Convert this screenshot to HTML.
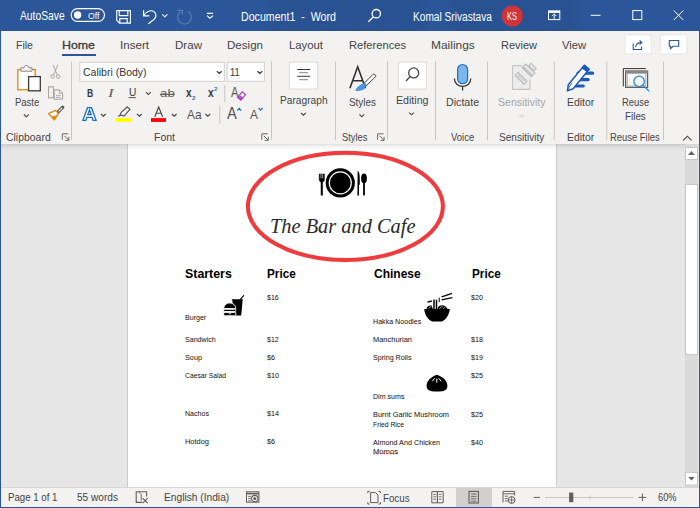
<!DOCTYPE html>
<html><head><meta charset="utf-8"><title>Document1 - Word</title>
<style>
html,body{margin:0;padding:0;}
body{width:700px;height:508px;overflow:hidden;position:relative;background:#f3f2f1;font-family:"Liberation Sans",sans-serif;}
.t{position:absolute;white-space:nowrap;transform-origin:0 0;}
.a{position:absolute;}
svg.ov{position:absolute;left:0;top:0;}
</style></head><body>

<div class="a" style="left:0;top:0;width:700px;height:31px;background:#2b579a"></div>
<div class="a" style="left:260px;top:0;width:330px;height:31px;background:linear-gradient(90deg,rgba(10,20,50,0) 0px,rgba(10,20,50,0.07) 14px,rgba(10,20,50,0.07) 160px,rgba(10,20,50,0) 172px,rgba(10,20,50,0) 182px,rgba(10,20,50,0.07) 192px,rgba(10,20,50,0.07) 312px,rgba(10,20,50,0) 326px)"></div>
<div class="a" style="left:0;top:144px;width:700px;height:343px;background:#e6e6e6"></div>
<div class="a" style="left:127px;top:144px;width:428px;height:343px;background:#fff;border-left:1px solid #cbcbcb;border-right:1px solid #cbcbcb"></div>
<div class="a" style="left:0;top:144px;width:700px;height:6px;background:linear-gradient(rgba(0,0,0,0.12),rgba(0,0,0,0.05) 40%,rgba(0,0,0,0))"></div>
<div class="a" style="left:685px;top:144px;width:13px;height:343px;background:#dadada"></div>
<div class="a" style="left:0;top:487px;width:700px;height:1px;background:#d6d6d6"></div>
<div class="a" style="left:456px;top:488px;width:36px;height:19px;background:#d2d0ce"></div>
<div class="a" style="left:0;top:31px;width:1px;height:477px;background:#2b579a"></div>
<div class="a" style="left:699px;top:31px;width:1px;height:477px;background:#2b579a"></div>
<div class="a" style="left:0;top:507px;width:700px;height:1px;background:#2b579a"></div>
<svg class="ov" width="700" height="508" viewBox="0 0 700 508"><rect x="71.2" y="8.6" width="33.3" height="12.8" rx="6.4" fill="none" stroke="#fff" stroke-width="1.1"/><circle cx="77.6" cy="15" r="3.7" fill="#fff"/><path d="M116.7 10.6H130.4V23.1H119.5L116.7 20.3Z" fill="none" stroke="#fff" stroke-width="1.1"/><path d="M119.2 10.6V15.6H127.8V10.6M119.8 23.1V18.6H127.2V23.1" fill="none" stroke="#fff" stroke-width="1.1"/><path d="M143.9 15.5C146.2 11.4 150.6 9.6 153.8 11.6C156.6 13.4 156.4 17 154.2 19.2L148.4 23.8" fill="none" stroke="#fff" stroke-width="1.2"/><path d="M143.6 10V15.8H149.4" fill="none" stroke="#fff" stroke-width="1.2"/><path d="M162.2 14.4l2.6 2.4 2.6-2.4" fill="none" stroke="#fff" stroke-width="1.1"/><path d="M180.4 11.8A6.8 6.8 0 1 0 188.2 11.5" fill="none" stroke="#5b7db3" stroke-width="1.2"/><path d="M177.2 10.4h5.2v4.4" fill="none" stroke="#5b7db3" stroke-width="1.2"/><path d="M206.8 13.4h6.3M207 15.6l3 2.6 3-2.6" fill="none" stroke="#fff" stroke-width="1.1"/><circle cx="376.3" cy="13.7" r="4.2" fill="none" stroke="#fff" stroke-width="1.3"/><path d="M373.2 16.9L368.4 21.8" stroke="#fff" stroke-width="1.4"/><circle cx="512.4" cy="16" r="10.6" fill="#d13438"/><rect x="548.5" y="10.9" width="11.3" height="8.7" fill="none" stroke="#fff" stroke-width="1"/><rect x="548.5" y="10.9" width="11.3" height="2" fill="#fff"/><path d="M554.2 18.8v-4.8M552.2 15.8l2-2 2 2" fill="none" stroke="#fff" stroke-width="1"/><path d="M590.8 15.3h9.8" stroke="#fff" stroke-width="1"/><rect x="632.8" y="10.6" width="9" height="9" fill="none" stroke="#fff" stroke-width="1"/><path d="M673.8 10.5l9.5 9.5M683.3 10.5l-9.5 9.5" stroke="#fff" stroke-width="1"/><rect x="62" y="54" width="34" height="2" fill="#2b579a"/><rect x="624.9" y="34.9" width="26.4" height="19" rx="1.2" fill="#fff" stroke="#e3e1df" stroke-width="0.8"/><rect x="660.3" y="34.9" width="26.6" height="19" rx="1.2" fill="#fff" stroke="#e3e1df" stroke-width="0.8"/><path d="M633.2 43.4V49.5H641.6V46.4" fill="none" stroke="#2b579a" stroke-width="1.1"/><path d="M635.6 47.2C635.8 44.2 637.8 42.6 641.2 42.6M639.6 40.5L641.9 42.6L639.6 44.7" fill="none" stroke="#2b579a" stroke-width="1.1"/><path d="M669.3 40.5H678.7V46.3H673.2L670.6 48.6V46.3H669.3Z" fill="none" stroke="#2b579a" stroke-width="1.1"/><rect x="71.0" y="61.5" width="1" height="78.5" fill="#c8c6c4"/><rect x="271.0" y="61.5" width="1" height="78.5" fill="#c8c6c4"/><rect x="335.0" y="61.5" width="1" height="78.5" fill="#c8c6c4"/><rect x="387.0" y="61.5" width="1" height="78.5" fill="#c8c6c4"/><rect x="435.0" y="61.5" width="1" height="78.5" fill="#c8c6c4"/><rect x="487.0" y="61.5" width="1" height="78.5" fill="#c8c6c4"/><rect x="553.8" y="61.5" width="1" height="78.5" fill="#c8c6c4"/><rect x="606.3" y="61.5" width="1" height="78.5" fill="#c8c6c4"/><rect x="663.0" y="61.5" width="1" height="78.5" fill="#c8c6c4"/><rect x="224.3" y="85" width="1" height="17" fill="#c8c6c4"/><rect x="219.3" y="105.5" width="1" height="18.5" fill="#c8c6c4"/><path d="M62.3 139.8v-6h6" fill="none" stroke="#605e5c" stroke-width="0.9"/><path d="M64.3 135.8l4.3 4.3M68.8 136.8v3.6h-3.6" fill="none" stroke="#605e5c" stroke-width="0.9"/><path d="M261.8 139.8v-6h6" fill="none" stroke="#605e5c" stroke-width="0.9"/><path d="M263.8 135.8l4.3 4.3M268.3 136.8v3.6h-3.6" fill="none" stroke="#605e5c" stroke-width="0.9"/><path d="M377.6 139.8v-6h6" fill="none" stroke="#605e5c" stroke-width="0.9"/><path d="M379.6 135.8l4.3 4.3M384.1 136.8v3.6h-3.6" fill="none" stroke="#605e5c" stroke-width="0.9"/><rect x="17.8" y="69.6" width="17.4" height="20.2" fill="#fff" stroke="#e8820c" stroke-width="1.3"/><path d="M20.8 71.2v-3.4h3.2c0.3-1.6 1.2-2.4 2.4-2.4s2.1 0.8 2.4 2.4h3.2v3.4z" fill="#f3f2f1" stroke="#8a8886" stroke-width="1"/><rect x="28.6" y="76.6" width="11.7" height="14.2" fill="#fff" stroke="#3b3a39" stroke-width="1.3"/><path d="M23.9 114.5l2.4 2.3 2.4-2.3" fill="none" stroke="#4a4948" stroke-width="1.15"/><circle cx="52.6" cy="76.4" r="1.8" fill="none" stroke="#a19f9d" stroke-width="0.9"/><circle cx="58.2" cy="76.4" r="1.8" fill="none" stroke="#a19f9d" stroke-width="0.9"/><path d="M53.6 74.9L57.8 64.8M57.2 74.9L53 64.8" stroke="#a19f9d" stroke-width="0.9"/><rect x="48.6" y="86.8" width="4.8" height="11" fill="#f3f2f1" stroke="#a19f9d" stroke-width="1"/><path d="M54.2 89.8h5.2l3.2 3.2v6.2h-8.4z" fill="#f3f2f1" stroke="#a19f9d" stroke-width="1"/><path d="M59.2 89.8v3.4h3.4" fill="none" stroke="#a19f9d" stroke-width="0.8"/><path d="M56 95.6h4.6M56 97.4h4.6" stroke="#a19f9d" stroke-width="0.8"/><path d="M62.6 107.4L57.6 112.4" stroke="#5a5958" stroke-width="3.4" stroke-linecap="round"/><path d="M62.2 107.8L58.6 111.4" stroke="#f3f2f1" stroke-width="1.2"/><path d="M48.6 113.6L55.4 110.4L58.4 113.4L54.4 120z" fill="#fff" stroke="#e8820c" stroke-width="1.3" stroke-linejoin="round"/><path d="M51.8 116.6L57.4 115L54.4 120z" fill="#e8820c"/><rect x="79.9" y="62.3" width="144.4" height="19" fill="#fff" stroke="#d2d0ce" stroke-width="1"/><rect x="227.2" y="62.3" width="37.2" height="19" fill="#fff" stroke="#d2d0ce" stroke-width="1"/><path d="M216.9 71.2l2.4 2.3 2.4-2.3M257.4 71.2l2.4 2.3 2.4-2.3" fill="none" stroke="#3b3a39" stroke-width="1.2"/><path d="M146 92.2l2.4 2.2 2.4-2.2" fill="none" stroke="#4a4948" stroke-width="1.15"/><path d="M101 114l2.4 2.2 2.4-2.2" fill="none" stroke="#4a4948" stroke-width="1.15"/><path d="M137 114l2.4 2.2 2.4-2.2" fill="none" stroke="#4a4948" stroke-width="1.15"/><path d="M171.8 114l2.4 2.2 2.4-2.2" fill="none" stroke="#4a4948" stroke-width="1.15"/><path d="M205.4 114l2.4 2.2 2.4-2.2" fill="none" stroke="#4a4948" stroke-width="1.15"/><rect x="128.6" y="97.1" width="7.3" height="1" fill="#605e5c"/><rect x="159.9" y="93.8" width="14.8" height="1" fill="#444"/><rect x="116" y="118.1" width="15" height="3.8" fill="#ffff00"/><path d="M120.2 115.2l0.8-2.6 6.4-5.8 2.6 2.6-5.8 6.4z" fill="none" stroke="#555" stroke-width="1.2" stroke-linejoin="round"/><path d="M118.2 116.6l2-1.4" stroke="#555" stroke-width="1.2"/><rect x="151" y="118.1" width="15" height="3.8" fill="#ff0000"/><path d="M154.8 116.8l3.9-9.8 3.9 9.8M156.2 113.2h5" fill="none" stroke="#444" stroke-width="1.1"/><path d="M82.9 120.3L87.5 107.7H91.5L96.1 120.3H93.1L92.1 117.3H86.9L85.9 120.3ZM87.8 114.7H91.2L89.5 109.9Z" fill="#fff" fill-rule="evenodd" stroke="#1a6ec7" stroke-width="1.3" stroke-linejoin="miter"/><path d="M237.6 97.4l4.6-5.6 3.3 2.8-4.6 5.6z" fill="#fff" stroke="#b146c2" stroke-width="1.3"/><path d="M238 97.8l2.2-2.6 3.2 2.7-2 2.4z" fill="#b146c2"/><path d="M237.2 110.6l2-2.2 2 2.2M258.6 108l2 2.2 2-2.2" fill="none" stroke="#1a6ec7" stroke-width="1.2"/><rect x="289.3" y="62.2" width="28.4" height="26.8" fill="#fff" stroke="#dcdad8" stroke-width="1"/><path d="M297.2 69.5h12.9M297.2 76.3h12.9" stroke="#3b3a39" stroke-width="1"/><path d="M299.2 72.7h8.8M299.2 79.7h8.8" stroke="#8a8886" stroke-width="1"/><path d="M301 113l2.4 2.2 2.4-2.2M359.4 114.4l2.4 2.2 2.4-2.2M409.2 112.6l2.4 2.2 2.4-2.2" fill="none" stroke="#4a4948" stroke-width="1.15"/><path d="M519.2 115l2.4 2.2 2.4-2.2" fill="none" stroke="#c8c6c4" stroke-width="1"/><path d="M349.9 88.2L357.7 66.8L365.5 88.2M352.5 80.8h10.4" fill="none" stroke="#323130" stroke-width="1.6"/><g transform="translate(364.2 85.6) rotate(-45)"><rect x="0" y="-1.7" width="15.4" height="3.4" rx="1.2" fill="#fff" stroke="#3b3a39" stroke-width="0.9"/></g><path d="M355.8 90.4C357.6 86.6 361.6 83.6 365.8 83.8C367 86.6 364.4 91 355.8 90.4z" fill="#4a98e4" stroke="#1a6ec7" stroke-width="0.6"/><rect x="398.3" y="62.2" width="28" height="26.8" fill="#fff" stroke="#dcdad8" stroke-width="1"/><circle cx="413.7" cy="72.9" r="5" fill="none" stroke="#444" stroke-width="1.3"/><path d="M410 76.6L406 81" stroke="#444" stroke-width="1.4"/><rect x="457.6" y="64.5" width="10" height="19.2" rx="5" fill="#7cb7ea" stroke="#1e6fc4" stroke-width="1.2"/><path d="M454.4 78.6c0 4.6 3.6 7.8 8.2 7.8s8.2-3.2 8.2-7.8" fill="none" stroke="#3b3a39" stroke-width="1.3"/><path d="M462.6 86.4v4.2" stroke="#3b3a39" stroke-width="1.3"/><rect x="512.6" y="65.6" width="17.4" height="23.8" fill="#ececec"/><path d="M522 65.6H512.6V89.4H530V79.6" fill="none" stroke="#c4c4c4" stroke-width="1.1"/><g transform="translate(521.1 78.3) rotate(45)"><rect x="-6.2" y="-2.1" width="12.4" height="4.2" fill="#ececec" stroke="#b8b8b8" stroke-width="1.1"/><rect x="-4" y="-0.7" width="8" height="1.4" fill="none" stroke="#b8b8b8" stroke-width="0.8"/></g><g transform="translate(528.5 70.4) rotate(45)"><rect x="-6.4" y="-2.6" width="12.8" height="5.2" fill="#e6e6e6" stroke="#b8b8b8" stroke-width="1.1"/><rect x="-6.4" y="0.4" width="12.8" height="1.6" fill="#c0c0c0"/></g><g transform="translate(532.6 66.9) rotate(45)"><rect x="-3.6" y="-1.5" width="7.2" height="3" fill="#f0f0f0" stroke="#b8b8b8" stroke-width="1.1"/></g><path d="M578 73.2h14.6M573.6 79.6h14.6M569.4 86h13.8" stroke="#185abd" stroke-width="3.2" stroke-linecap="round"/><g transform="translate(567.4 90.8) rotate(-50.6)"><path d="M0 0L5.2 -3.1H30.4V3.1H5.2z" fill="#fff" stroke="#185abd" stroke-width="1.5" stroke-linejoin="round"/><rect x="26.6" y="-3.3" width="4.6" height="6.6" fill="#185abd"/><path d="M2 -0.6L9 -1.6" stroke="#185abd" stroke-width="0.8"/></g><path d="M623.3 86.4V68.6h22.6" fill="none" stroke="#323130" stroke-width="1"/><rect x="625.6" y="71.0" width="22" height="16.4" fill="#f3f2f1" stroke="#605e5c" stroke-width="1.2"/><rect x="625.6" y="71.0" width="22" height="2.2" fill="#8a8886"/><rect x="627.2" y="73.4" width="18.6" height="12.6" fill="#f7f7f7" stroke="#a19f9d" stroke-width="0.8"/><circle cx="639.1" cy="81.4" r="5.2" fill="#f7f9fb" stroke="#2b8ad8" stroke-width="1.3"/><path d="M642.8 85.1l6.4 6.2" stroke="#2b8ad8" stroke-width="1.3"/><path d="M683.2 140.4l4.2-4.2 4.2 4.2" fill="none" stroke="#444" stroke-width="1.1"/><rect x="685.5" y="147.5" width="12" height="12" fill="#fff" stroke="#c6c6c6" stroke-width="1"/><path d="M688 154.9h6.8l-3.4-3.8z" fill="#606060"/><rect x="685.5" y="184.5" width="12" height="170" fill="#fff" stroke="#c6c6c6" stroke-width="1"/><rect x="685.5" y="472.5" width="12" height="12.6" fill="#fff" stroke="#c6c6c6" stroke-width="1"/><path d="M688.3 477h6.4l-3.2 3.6z" fill="#606060"/><path d="M142.2 502.4H136.2V491.8H146.6V496.6" fill="none" stroke="#605e5c" stroke-width="1.1"/><path d="M138.6 491.8L141.2 494.6V500.6" fill="none" stroke="#605e5c" stroke-width="0.9"/><path d="M142.6 498.2l5 5M147.6 498.2l-5 5" stroke="#605e5c" stroke-width="1.1"/><rect x="246.5" y="491.8" width="12.4" height="10.4" fill="none" stroke="#605e5c" stroke-width="1"/><path d="M246.5 493.6h12.4" stroke="#605e5c" stroke-width="1.6"/><path d="M248.2 496.4h2.6M248.2 498.6h2.6M248.2 500.8h2.6" stroke="#605e5c" stroke-width="0.9"/><circle cx="254.8" cy="498.6" r="3.2" fill="#f3f2f1" stroke="#605e5c" stroke-width="1.1"/><circle cx="254.8" cy="498.6" r="1.5" fill="#605e5c"/><path d="M367.8 493.2v-1.8h1.8M367.8 502.2v1.8h1.8M378.6 491.4h1.8v1.8M378.6 504h1.8v-1.8" fill="none" stroke="#605e5c" stroke-width="1"/><path d="M370.6 492.6h5l2.4 2.4v7.6h-7.4z" fill="none" stroke="#605e5c" stroke-width="1"/><path d="M431.8 491.6h5.6v11.2h-5.6zM437.4 491.6h5.8v11.2h-5.8z" fill="none" stroke="#605e5c" stroke-width="1"/><path d="M433.2 494.4h2.8M433.2 496.8h2.8M433.2 499.2h2.8M438.8 494.4h2.8M438.8 496.8h2.8M438.8 499.2h2.8" stroke="#605e5c" stroke-width="0.8"/><rect x="469" y="491.4" width="9.4" height="11.6" fill="none" stroke="#605e5c" stroke-width="1.1"/><path d="M471 494h5.4M471 496.4h5.4M471 498.8h5.4M471 501.2h5.4" stroke="#605e5c" stroke-width="0.9"/><path d="M503 502.4v-11h11.6v4" fill="none" stroke="#605e5c" stroke-width="1"/><path d="M503 493.8h11.6M504.8 496.2h3M504.8 498.6h3M504.8 501h3" stroke="#605e5c" stroke-width="0.9"/><circle cx="511.6" cy="500" r="3.4" fill="#f3f2f1" stroke="#605e5c" stroke-width="1"/><path d="M508.2 500h6.8M511.6 496.6v6.8" stroke="#605e5c" stroke-width="0.8"/><path d="M533.6 497.4h6.4M638.6 497.4h7.6M642.4 493.6v7.6" stroke="#605e5c" stroke-width="1"/><rect x="545" y="497" width="88.6" height="1" fill="#c8c6c4"/><rect x="589.6" y="495.4" width="1" height="4" fill="#c8c6c4"/><rect x="569.1" y="492.6" width="4.2" height="9.6" fill="#605e5c"/><ellipse cx="345.4" cy="207.1" rx="97.5" ry="53.55" fill="none" stroke="rgba(0,0,0,0.10)" stroke-width="4"/><ellipse cx="345.4" cy="206.35" rx="97.5" ry="53.55" fill="none" stroke="#f03a3c" stroke-width="4"/><circle cx="340.3" cy="182.9" r="14.6" fill="#000"/><circle cx="340.3" cy="182.9" r="11" fill="none" stroke="#fff" stroke-width="1.2"/><path d="M319.2 173.8v5.6c0 1.4 0.8 2.2 1.8 2.6v13.2h1.6v-13.2c1-0.4 1.8-1.2 1.8-2.6v-5.6" fill="#000" stroke="#000" stroke-width="0.5"/><path d="M320.9 173.8v4.6M322.6 173.8v4.6" stroke="#fff" stroke-width="0.6"/><path d="M357.6 171c1.8 0.4 2.2 4 2.2 9.6v4.2h-0.8v10.6h-1.6z" fill="#000"/><ellipse cx="364" cy="178.4" rx="2.9" ry="4.8" fill="#000"/><rect x="363.1" y="181" width="1.8" height="14.4" fill="#000"/><path d="M231.6 299.2H242.9L242.6 300.6L241.2 315.6H233.6L232.4 300.6Z" fill="#000"/><path d="M240.2 299.6L243.6 295.6" stroke="#000" stroke-width="1.1" stroke-linecap="round"/><path d="M223.8 308.6C223.8 305 226.6 303 229.8 303C233 303 235.8 305 235.8 308.6Z" fill="#000" stroke="#fff" stroke-width="0.9"/><rect x="223.8" y="309.3" width="12" height="2.2" rx="0.6" fill="#000" stroke="#fff" stroke-width="0.9"/><path d="M223.8 312.4H235.8V314.9C235.8 315.4 235.4 315.8 234.9 315.8H224.7C224.2 315.8 223.8 315.4 223.8 314.9Z" fill="#000" stroke="#fff" stroke-width="0.9"/><path d="M228.2 312.6L229.8 314.2L231.4 312.6" fill="none" stroke="#fff" stroke-width="0.8"/><path d="M426.4 309.4C426.6 306.4 429 305.2 431.6 305.6L433 309.4zM437.4 309.4C437.8 306.2 440.6 304.8 443.4 305.4C445.6 305.8 447.2 307.4 447.6 309.4z" fill="#000"/><path d="M428.6 308.6C429.2 307.2 430.4 306.8 431.4 306.8M439.6 308.8C440.2 307.2 441.6 306.6 443 306.8M443.4 308.8C443.8 307.8 444.6 307.4 445.4 307.6" fill="none" stroke="#fff" stroke-width="0.6"/><path d="M424.2 308.9h25.6c-0.6 6.6-4.4 11.4-8.4 12.6h-8.8c-4-1.2-7.8-6-8.4-12.6z" fill="#000"/><path d="M434 299.4v10.2M436.5 299.8v9.8" stroke="#000" stroke-width="1.5"/><path d="M439.2 297.6v4.6" stroke="#000" stroke-width="1"/><path d="M441.6 296.8l10.4-3.4M441.6 299.8l10.8-2.2M427.4 302.2l4.4-1.2" stroke="#000" stroke-width="1.3"/><g transform="translate(0 0.7)"><path d="M426.6 385c0-5.2 5-9.2 10.2-11 5.4 1.6 10.6 5.6 10.6 11 0 3.8-2 5.8-10.4 5.8s-10.4-2-10.4-5.8z" fill="#000"/><path d="M432.6 380.2l1.8-2.2M436.8 381.6v-3.2M441 380.2l-1.8-2.2" stroke="#fff" stroke-width="1" stroke-linecap="round"/></g></svg><span class="t" id="t0" style="left:19.70px;top:10.20px;font-size:12.35px;line-height:12.35px;color:#fff;font-weight:400;font-family:'Liberation Sans', sans-serif;font-style:normal;transform:scaleX(0.8332);">AutoSave</span><span class="t" id="t1" style="left:87.90px;top:10.91px;font-size:9.60px;line-height:9.60px;color:#fff;font-weight:400;font-family:'Liberation Sans', sans-serif;font-style:normal;transform:scaleX(0.9030);">Off</span><span class="t" id="t2" style="left:241.00px;top:10.91px;font-size:12.35px;line-height:12.35px;color:#fff;font-weight:400;font-family:'Liberation Sans', sans-serif;font-style:normal;transform:scaleX(0.8618);">Document1 &nbsp;- &nbsp;Word</span><span class="t" id="t3" style="left:412.80px;top:10.80px;font-size:12.07px;line-height:12.07px;color:#fff;font-weight:400;font-family:'Liberation Sans', sans-serif;font-style:normal;transform:scaleX(0.8406);">Komal Srivastava</span><span class="t" id="t4" style="left:507.40px;top:12.31px;font-size:10.43px;line-height:10.43px;color:#fff;font-weight:400;font-family:'Liberation Sans', sans-serif;font-style:normal;transform:scaleX(0.7191);">KS</span><span class="t" id="t5" style="left:16.00px;top:40.01px;font-size:10.70px;line-height:10.70px;color:#444;font-weight:400;font-family:'Liberation Sans', sans-serif;font-style:normal;transform:scaleX(0.9864);">File</span><span class="t" id="t6" style="left:62.00px;top:40.01px;font-size:10.97px;line-height:10.97px;color:#3b3a39;font-weight:400;font-family:'Liberation Sans', sans-serif;font-style:normal;transform:scaleX(1.1276);-webkit-text-stroke:0.3px #3b3a39;">Home</span><span class="t" id="t7" style="left:120.00px;top:40.01px;font-size:10.70px;line-height:10.70px;color:#444;font-weight:400;font-family:'Liberation Sans', sans-serif;font-style:normal;transform:scaleX(1.0847);">Insert</span><span class="t" id="t8" style="left:174.50px;top:40.01px;font-size:10.70px;line-height:10.70px;color:#444;font-weight:400;font-family:'Liberation Sans', sans-serif;font-style:normal;transform:scaleX(1.0820);">Draw</span><span class="t" id="t9" style="left:226.50px;top:40.01px;font-size:10.70px;line-height:10.70px;color:#444;font-weight:400;font-family:'Liberation Sans', sans-serif;font-style:normal;transform:scaleX(1.0817);">Design</span><span class="t" id="t10" style="left:288.50px;top:40.01px;font-size:10.70px;line-height:10.70px;color:#444;font-weight:400;font-family:'Liberation Sans', sans-serif;font-style:normal;transform:scaleX(1.0594);">Layout</span><span class="t" id="t11" style="left:348.70px;top:40.01px;font-size:10.70px;line-height:10.70px;color:#444;font-weight:400;font-family:'Liberation Sans', sans-serif;font-style:normal;transform:scaleX(1.0429);">References</span><span class="t" id="t12" style="left:431.00px;top:40.01px;font-size:10.70px;line-height:10.70px;color:#444;font-weight:400;font-family:'Liberation Sans', sans-serif;font-style:normal;transform:scaleX(1.1173);">Mailings</span><span class="t" id="t13" style="left:501.00px;top:40.01px;font-size:10.70px;line-height:10.70px;color:#444;font-weight:400;font-family:'Liberation Sans', sans-serif;font-style:normal;transform:scaleX(1.0272);">Review</span><span class="t" id="t14" style="left:561.70px;top:40.01px;font-size:10.70px;line-height:10.70px;color:#444;font-weight:400;font-family:'Liberation Sans', sans-serif;font-style:normal;transform:scaleX(1.0529);">View</span><span class="t" id="t15" style="left:82.80px;top:66.71px;font-size:10.56px;line-height:10.56px;color:#333;font-weight:400;font-family:'Liberation Sans', sans-serif;font-style:normal;transform:scaleX(0.9955);">Calibri (Body)</span><span class="t" id="t16" style="left:229.60px;top:66.71px;font-size:10.56px;line-height:10.56px;color:#333;font-weight:400;font-family:'Liberation Sans', sans-serif;font-style:normal;transform:scaleX(0.8856);">11</span><span class="t" id="t17" style="left:15.00px;top:98.00px;font-size:10.43px;line-height:10.43px;color:#444;font-weight:400;font-family:'Liberation Sans', sans-serif;font-style:normal;transform:scaleX(0.9116);">Paste</span><span class="t" id="t18" style="left:279.70px;top:95.71px;font-size:10.29px;line-height:10.29px;color:#444;font-weight:400;font-family:'Liberation Sans', sans-serif;font-style:normal;transform:scaleX(0.9913);">Paragraph</span><span class="t" id="t19" style="left:348.60px;top:98.01px;font-size:10.29px;line-height:10.29px;color:#444;font-weight:400;font-family:'Liberation Sans', sans-serif;font-style:normal;transform:scaleX(0.9607);">Styles</span><span class="t" id="t20" style="left:395.50px;top:96.40px;font-size:10.29px;line-height:10.29px;color:#444;font-weight:400;font-family:'Liberation Sans', sans-serif;font-style:normal;transform:scaleX(1.0338);">Editing</span><span class="t" id="t21" style="left:445.50px;top:98.01px;font-size:10.29px;line-height:10.29px;color:#444;font-weight:400;font-family:'Liberation Sans', sans-serif;font-style:normal;transform:scaleX(1.0375);">Dictate</span><span class="t" id="t22" style="left:497.50px;top:98.01px;font-size:10.29px;line-height:10.29px;color:#a6a6a6;font-weight:400;font-family:'Liberation Sans', sans-serif;font-style:normal;transform:scaleX(1.0263);">Sensitivity</span><span class="t" id="t23" style="left:566.70px;top:98.01px;font-size:10.29px;line-height:10.29px;color:#444;font-weight:400;font-family:'Liberation Sans', sans-serif;font-style:normal;transform:scaleX(1.0164);">Editor</span><span class="t" id="t24" style="left:621.80px;top:98.01px;font-size:10.29px;line-height:10.29px;color:#444;font-weight:400;font-family:'Liberation Sans', sans-serif;font-style:normal;transform:scaleX(0.9148);">Reuse</span><span class="t" id="t25" style="left:624.60px;top:112.01px;font-size:10.29px;line-height:10.29px;color:#444;font-weight:400;font-family:'Liberation Sans', sans-serif;font-style:normal;transform:scaleX(0.9577);">Files</span><span class="t" id="t26" style="left:6.40px;top:132.61px;font-size:10.15px;line-height:10.15px;color:#444;font-weight:400;font-family:'Liberation Sans', sans-serif;font-style:normal;transform:scaleX(1.0313);">Clipboard</span><span class="t" id="t27" style="left:154.00px;top:132.61px;font-size:10.15px;line-height:10.15px;color:#444;font-weight:400;font-family:'Liberation Sans', sans-serif;font-style:normal;transform:scaleX(1.0362);">Font</span><span class="t" id="t28" style="left:341.50px;top:132.61px;font-size:10.15px;line-height:10.15px;color:#444;font-weight:400;font-family:'Liberation Sans', sans-serif;font-style:normal;transform:scaleX(0.9174);">Styles</span><span class="t" id="t29" style="left:450.50px;top:132.61px;font-size:10.15px;line-height:10.15px;color:#444;font-weight:400;font-family:'Liberation Sans', sans-serif;font-style:normal;transform:scaleX(0.9382);">Voice</span><span class="t" id="t30" style="left:498.75px;top:132.61px;font-size:10.15px;line-height:10.15px;color:#444;font-weight:400;font-family:'Liberation Sans', sans-serif;font-style:normal;transform:scaleX(0.9928);">Sensitivity</span><span class="t" id="t31" style="left:566.70px;top:132.61px;font-size:10.15px;line-height:10.15px;color:#444;font-weight:400;font-family:'Liberation Sans', sans-serif;font-style:normal;transform:scaleX(1.0320);">Editor</span><span class="t" id="t32" style="left:610.00px;top:132.61px;font-size:10.15px;line-height:10.15px;color:#444;font-weight:400;font-family:'Liberation Sans', sans-serif;font-style:normal;transform:scaleX(0.9295);">Reuse Files</span><span class="t" id="t33" style="left:8.40px;top:492.90px;font-size:10.29px;line-height:10.29px;color:#444;font-weight:400;font-family:'Liberation Sans', sans-serif;font-style:normal;transform:scaleX(0.9412);">Page 1 of 1</span><span class="t" id="t34" style="left:76.50px;top:492.90px;font-size:10.29px;line-height:10.29px;color:#444;font-weight:400;font-family:'Liberation Sans', sans-serif;font-style:normal;transform:scaleX(0.9828);">55 words</span><span class="t" id="t35" style="left:164.00px;top:492.90px;font-size:10.29px;line-height:10.29px;color:#444;font-weight:400;font-family:'Liberation Sans', sans-serif;font-style:normal;transform:scaleX(0.9921);">English (India)</span><span class="t" id="t36" style="left:382.50px;top:492.51px;font-size:10.70px;line-height:10.70px;color:#444;font-weight:400;font-family:'Liberation Sans', sans-serif;font-style:normal;transform:scaleX(0.9104);">Focus</span><span class="t" id="t37" style="left:657.50px;top:492.90px;font-size:10.29px;line-height:10.29px;color:#444;font-weight:400;font-family:'Liberation Sans', sans-serif;font-style:normal;transform:scaleX(0.8990);">60%</span><span class="t" id="t38" style="left:185.20px;top:267.61px;font-size:12.35px;line-height:12.35px;color:#000;font-weight:700;font-family:'Liberation Sans', sans-serif;font-style:normal;transform:scaleX(1.0027);">Starters</span><span class="t" id="t39" style="left:267.30px;top:267.61px;font-size:12.35px;line-height:12.35px;color:#000;font-weight:700;font-family:'Liberation Sans', sans-serif;font-style:normal;transform:scaleX(0.9502);">Price</span><span class="t" id="t40" style="left:373.60px;top:267.61px;font-size:12.35px;line-height:12.35px;color:#000;font-weight:700;font-family:'Liberation Sans', sans-serif;font-style:normal;transform:scaleX(0.9723);">Chinese</span><span class="t" id="t41" style="left:471.70px;top:267.61px;font-size:12.35px;line-height:12.35px;color:#000;font-weight:700;font-family:'Liberation Sans', sans-serif;font-style:normal;transform:scaleX(0.9502);">Price</span><span class="t" id="t42" style="left:184.80px;top:314.31px;font-size:7.54px;line-height:7.54px;color:#111;font-weight:400;font-family:'Liberation Sans', sans-serif;font-style:normal;transform:scaleX(0.9377);">Burger</span><span class="t" id="t43" style="left:267.30px;top:293.50px;font-size:7.54px;line-height:7.54px;color:#111;font-weight:400;font-family:'Liberation Sans', sans-serif;font-style:normal;transform:scaleX(0.9302);">$16</span><span class="t" id="t44" style="left:184.80px;top:335.50px;font-size:7.54px;line-height:7.54px;color:#111;font-weight:400;font-family:'Liberation Sans', sans-serif;font-style:normal;transform:scaleX(0.9401);">Sandwich</span><span class="t" id="t45" style="left:267.30px;top:335.50px;font-size:7.54px;line-height:7.54px;color:#111;font-weight:400;font-family:'Liberation Sans', sans-serif;font-style:normal;transform:scaleX(0.9302);">$12</span><span class="t" id="t46" style="left:184.80px;top:353.50px;font-size:7.54px;line-height:7.54px;color:#111;font-weight:400;font-family:'Liberation Sans', sans-serif;font-style:normal;transform:scaleX(0.9663);">Soup</span><span class="t" id="t47" style="left:267.30px;top:353.50px;font-size:7.54px;line-height:7.54px;color:#111;font-weight:400;font-family:'Liberation Sans', sans-serif;font-style:normal;transform:scaleX(0.9534);">$6</span><span class="t" id="t48" style="left:184.80px;top:371.91px;font-size:7.54px;line-height:7.54px;color:#111;font-weight:400;font-family:'Liberation Sans', sans-serif;font-style:normal;transform:scaleX(0.8983);">Caesar Salad</span><span class="t" id="t49" style="left:267.30px;top:371.91px;font-size:7.54px;line-height:7.54px;color:#111;font-weight:400;font-family:'Liberation Sans', sans-serif;font-style:normal;transform:scaleX(0.9540);">$10</span><span class="t" id="t50" style="left:184.80px;top:409.81px;font-size:7.54px;line-height:7.54px;color:#111;font-weight:400;font-family:'Liberation Sans', sans-serif;font-style:normal;transform:scaleX(0.9394);">Nachos</span><span class="t" id="t51" style="left:267.30px;top:409.81px;font-size:7.54px;line-height:7.54px;color:#111;font-weight:400;font-family:'Liberation Sans', sans-serif;font-style:normal;transform:scaleX(0.9540);">$14</span><span class="t" id="t52" style="left:184.80px;top:437.81px;font-size:7.54px;line-height:7.54px;color:#111;font-weight:400;font-family:'Liberation Sans', sans-serif;font-style:normal;transform:scaleX(0.9878);">Hotdog</span><span class="t" id="t53" style="left:267.30px;top:437.81px;font-size:7.54px;line-height:7.54px;color:#111;font-weight:400;font-family:'Liberation Sans', sans-serif;font-style:normal;transform:scaleX(0.9534);">$6</span><span class="t" id="t54" style="left:373.10px;top:318.31px;font-size:7.54px;line-height:7.54px;color:#111;font-weight:400;font-family:'Liberation Sans', sans-serif;font-style:normal;transform:scaleX(0.9437);">Hakka Noodles</span><span class="t" id="t55" style="left:471.30px;top:293.81px;font-size:7.54px;line-height:7.54px;color:#111;font-weight:400;font-family:'Liberation Sans', sans-serif;font-style:normal;transform:scaleX(0.9540);">$20</span><span class="t" id="t56" style="left:373.10px;top:335.50px;font-size:7.54px;line-height:7.54px;color:#111;font-weight:400;font-family:'Liberation Sans', sans-serif;font-style:normal;transform:scaleX(0.9909);">Manchurian</span><span class="t" id="t57" style="left:471.30px;top:335.50px;font-size:7.54px;line-height:7.54px;color:#111;font-weight:400;font-family:'Liberation Sans', sans-serif;font-style:normal;transform:scaleX(0.9540);">$18</span><span class="t" id="t58" style="left:373.10px;top:353.50px;font-size:7.54px;line-height:7.54px;color:#111;font-weight:400;font-family:'Liberation Sans', sans-serif;font-style:normal;transform:scaleX(0.9481);">Spring Rolls</span><span class="t" id="t59" style="left:471.30px;top:353.50px;font-size:7.54px;line-height:7.54px;color:#111;font-weight:400;font-family:'Liberation Sans', sans-serif;font-style:normal;transform:scaleX(0.9540);">$19</span><span class="t" id="t60" style="left:471.30px;top:372.00px;font-size:7.54px;line-height:7.54px;color:#111;font-weight:400;font-family:'Liberation Sans', sans-serif;font-style:normal;transform:scaleX(0.9540);">$25</span><span class="t" id="t61" style="left:373.10px;top:392.50px;font-size:7.54px;line-height:7.54px;color:#111;font-weight:400;font-family:'Liberation Sans', sans-serif;font-style:normal;transform:scaleX(0.9407);">Dim sums</span><span class="t" id="t62" style="left:373.10px;top:410.50px;font-size:7.54px;line-height:7.54px;color:#111;font-weight:400;font-family:'Liberation Sans', sans-serif;font-style:normal;transform:scaleX(0.9814);">Burnt Garlic Mushroom</span><span class="t" id="t63" style="left:471.30px;top:410.50px;font-size:7.54px;line-height:7.54px;color:#111;font-weight:400;font-family:'Liberation Sans', sans-serif;font-style:normal;transform:scaleX(0.9540);">$25</span><span class="t" id="t64" style="left:373.10px;top:420.50px;font-size:7.54px;line-height:7.54px;color:#111;font-weight:400;font-family:'Liberation Sans', sans-serif;font-style:normal;transform:scaleX(0.9030);">Fried Rice</span><span class="t" id="t65" style="left:373.10px;top:438.50px;font-size:7.54px;line-height:7.54px;color:#111;font-weight:400;font-family:'Liberation Sans', sans-serif;font-style:normal;transform:scaleX(0.9582);">Almond And Chicken</span><span class="t" id="t66" style="left:471.30px;top:438.50px;font-size:7.54px;line-height:7.54px;color:#111;font-weight:400;font-family:'Liberation Sans', sans-serif;font-style:normal;transform:scaleX(0.9540);">$40</span><span class="t" id="t67" style="left:373.10px;top:448.00px;font-size:7.54px;line-height:7.54px;color:#111;font-weight:400;font-family:'Liberation Sans', sans-serif;font-style:normal;transform:scaleX(1.0120);">Momos</span><span class="t" id="t68" style="left:270.00px;top:217.00px;font-size:19.94px;line-height:19.94px;color:#2a2a2a;font-weight:400;font-family:'Liberation Serif', serif;font-style:italic;transform:scaleX(1.0223);">The Bar and Cafe</span><span class="t" id="t69" style="left:86.70px;top:87.91px;font-size:11.52px;line-height:11.52px;color:#3b3a39;font-weight:700;font-family:'Liberation Sans', sans-serif;font-style:normal;transform:scaleX(0.7445);">B</span><span class="t" id="t70" style="left:108.30px;top:86.91px;font-size:12.69px;line-height:12.69px;color:#605e5c;font-weight:400;font-family:'Liberation Serif', serif;font-style:italic;transform:scaleX(1.3461);">I</span><span class="t" id="t71" style="left:128.60px;top:87.90px;font-size:10.43px;line-height:10.43px;color:#3b3a39;font-weight:400;font-family:'Liberation Sans', sans-serif;font-style:normal;transform:scaleX(0.9693);">U</span><span class="t" id="t72" style="left:159.90px;top:88.21px;font-size:11.25px;line-height:11.25px;color:#605e5c;font-weight:400;font-family:'Liberation Sans', sans-serif;font-style:normal;transform:scaleX(1.1825);">ab</span><span class="t" id="t73" style="left:185.90px;top:87.12px;font-size:12.48px;line-height:12.48px;color:#3b3a39;font-weight:700;font-family:'Liberation Sans', sans-serif;font-style:normal;transform:scaleX(0.8072);">x</span><span class="t" id="t74" style="left:192.00px;top:96.11px;font-size:5.35px;line-height:5.35px;color:#1a6ec7;font-weight:700;font-family:'Liberation Sans', sans-serif;font-style:normal;transform:scaleX(1.1058);">2</span><span class="t" id="t75" style="left:207.60px;top:87.12px;font-size:12.48px;line-height:12.48px;color:#3b3a39;font-weight:700;font-family:'Liberation Sans', sans-serif;font-style:normal;transform:scaleX(0.8216);">x</span><span class="t" id="t76" style="left:213.80px;top:86.61px;font-size:5.62px;line-height:5.62px;color:#1a6ec7;font-weight:700;font-family:'Liberation Sans', sans-serif;font-style:normal;transform:scaleX(1.0560);">2</span><span class="t" id="t77" style="left:231.40px;top:85.11px;font-size:14.54px;line-height:14.54px;color:#5a5958;font-weight:400;font-family:'Liberation Sans', sans-serif;font-style:normal;transform:scaleX(0.7626);">A</span><span class="t" id="t78" style="left:186.50px;top:109.31px;font-size:12.35px;line-height:12.35px;color:#555;font-weight:400;font-family:'Liberation Sans', sans-serif;font-style:normal;transform:scaleX(0.9597);">Aa</span><span class="t" id="t79" style="left:227.30px;top:106.30px;font-size:16.87px;line-height:16.87px;color:#555;font-weight:400;font-family:'Liberation Sans', sans-serif;font-style:normal;transform:scaleX(0.8711);">A</span><span class="t" id="t80" style="left:250.30px;top:108.31px;font-size:13.44px;line-height:13.44px;color:#555;font-weight:400;font-family:'Liberation Sans', sans-serif;font-style:normal;transform:scaleX(0.8808);">A</span><svg class="ov" width="700" height="508" viewBox="0 0 700 508"><path d="M373.4 453.8H399.8" stroke="#ee1c25" stroke-width="1" stroke-dasharray="1.4 1.9"/></svg></body></html>
